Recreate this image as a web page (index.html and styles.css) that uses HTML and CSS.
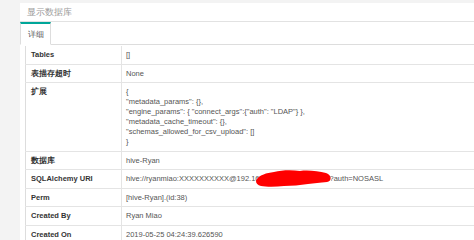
FILE: index.html
```html
<!DOCTYPE html>
<html lang="zh">
<head>
  <meta charset="UTF-8">
  <title>显示数据库</title>
  <link rel="stylesheet" href="styles.css">
</head>
<body>
  <div class="page">
    <div class="panel">
      <div class="panel-heading">显示数据库</div>
      <ul class="tabs">
        <li class="active">详细</li>
      </ul>
      <div class="tab-content">
        <table class="detail">
          <tr><th>Tables</th><td>[]</td></tr>
          <tr><th>表描存超时</th><td>None</td></tr>
          <tr>
            <th>扩展</th>
            <td>{<br>"metadata_params": {},<br>"engine_params": { "connect_args":{"auth": "LDAP"} },<br>"metadata_cache_timeout": {},<br>"schemas_allowed_for_csv_upload": []<br>}</td>
          </tr>
          <tr><th>数据库</th><td>hive-Ryan</td></tr>
          <tr>
            <th>SQLAlchemy URI</th>
            <td>hive://ryanmiao:XXXXXXXXXX@192.16<span class="redact"><svg width="76" height="19" viewBox="0 0 76 19"><path d="M1 10 C4 6 10 4 18 3 C26 1 36 1 44 2 C52 1 62 2 70 4 C76 6 76 12 71 13 C64 14 58 14 52 15 C44 16 36 17 28 17 C20 18 10 18 5 17 C0 16 -1 12 1 10 Z" fill="#ff0000"/></svg></span>?auth=NOSASL</td>
          </tr>
          <tr><th>Perm</th><td>[hive-Ryan].(id:38)</td></tr>
          <tr><th>Created By</th><td>Ryan Miao</td></tr>
          <tr><th>Created On</th><td>2019-05-25 04:24:39.626590</td></tr>
        </table>
      </div>
    </div>
  </div>
</body>
</html>
```

FILE: styles.css
```css
html, body {
  overflow: hidden;
}

body {
  margin: 0;
  background: #f3f3f3;
  font-family: "Liberation Sans", Arial, sans-serif;
  font-size: 7.5px;
  color: #555;
}

.page {
  padding: 3px 0 0 20px;
}

.panel {
  background: #fff;
  width: 560px;
}

.panel-heading {
  height: 18px;
  line-height: 19px;
  padding-left: 7px;
  font-size: 8.5px;
  color: #9a9a9a;
  border-bottom: 1px solid #e2e2e2;
}

.tabs {
  display: flex;
  margin: 0;
  padding: 0;
  list-style: none;
  border-bottom: 1px solid #ddd;
}

.tabs li {
  height: 20px;
  line-height: 21px;
  padding: 0 6px 0 7px;
  margin-bottom: -1px;
  border: 1px solid #ddd;
  border-top: 2px solid #00a699;
  border-bottom-color: #fff;
  color: #555;
}

.tab-content {
  padding: 1px 0 0 5px;
}

.detail {
  width: 100%;
  border-collapse: collapse;
  border-left: 1px solid #ddd;
}

.detail th,
.detail td {
  text-align: left;
  vertical-align: top;
  line-height: 10px;
  padding: 4px 4px 3.5px;
  border-top: 1px solid #e4e4e4;
}

.detail th {
  width: 86px;
  padding-left: 5px;
  font-weight: bold;
  color: #333;
  border-right: 1px solid #e4e4e4;
}

.detail tr:first-child th,
.detail tr:first-child td {
  border-top: 0;
}

.redact {
  display: inline-block;
  width: 70px;
  height: 10px;
  vertical-align: top;
}

.redact svg {
  display: block;
  margin: -5px 0 0 -4px;
}
```
